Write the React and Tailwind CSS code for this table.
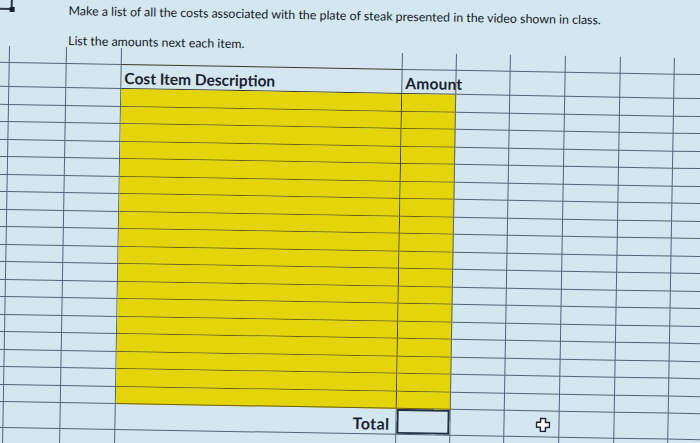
import React from "react";

const W = [
  "w-[27px]",
  "w-[57px]",
  "w-[55px]",
  "w-[281px]",
  "w-[54px]",
  "w-[54px]",
  "w-[55px]",
  "w-[55px]",
  "w-[54px]",
  "w-[55px]",
  "w-[33px]",
];

const FONT = { fontFamily: "Lato, 'Open Sans', Arial, sans-serif" };

function Cell({ i, kind }) {
  const base = `shrink-0 border-r border-b ${W[i]} flex items-end`;
  if (kind === "yellow" && (i === 3 || i === 4)) {
    return (
      <div
        className={`${base} bg-[#e4d40a] border-b-[#6a5f14] ${
          i === 3 ? "border-r-[#3b3a26]" : "border-r-[#4f6479]"
        }`}
      />
    );
  }
  if (kind === "header" && i === 3) {
    return (
      <div className={`${base} border-[#4f6479] border-b-[#3b3a26] pl-[3px] pb-[1px]`}>
        <span className="text-[15.5px] leading-[18px] font-bold text-[#1a2230]">
          Cost Item Description
        </span>
      </div>
    );
  }
  if (kind === "header" && i === 4) {
    return (
      <div className={`${base} border-[#4f6479] border-b-[#3b3a26] pl-[3px] pb-[1px]`}>
        <span className="text-[15.5px] leading-[18px] font-bold text-[#1a2230] tracking-[0.2px]">
          Amount
        </span>
      </div>
    );
  }
  if (kind === "total" && i === 3) {
    return (
      <div className={`${base} border-[#4f6479] justify-end pr-[6px] pb-[1px]`}>
        <span className="text-[16px] leading-[18px] font-bold text-[#1a2230] tracking-[0.4px]">
          Total
        </span>
      </div>
    );
  }
  if (kind === "total" && i === 4) {
    return (
      <div
        className={`${base} border-[#4f6479] shadow-[inset_0_0_0_2px_#253040]`}
      />
    );
  }
  if (kind === "plain" && i === 3) {
    return <div className={`${base} border-[#4f6479] border-b-[#3b3a26]`} />;
  }
  return <div className={`${base} border-[#4f6479]`} />;
}

function Row({ h, kind }) {
  return (
    <div className={`flex ${h}`}>
      {W.map((_, i) => (
        <Cell key={i} i={i} kind={kind} />
      ))}
    </div>
  );
}

export default function App() {
  const yellowRows = Array.from({ length: 18 });
  return (
    <div className="w-[700px] h-[443px] overflow-hidden bg-[#d4e7f1]" style={FONT}>
      <div className="relative w-[780px] -ml-[20px] -mt-[20px] rotate-[1deg] origin-[370px_241px] bg-[#d4e7f1]">
        {/* selection corner of the cell above */}
        <div className="absolute left-[27px] top-0 w-[2px] h-[35px] bg-[#2c3440]" />
        <div className="absolute left-0 top-[34px] w-[29px] h-[2px] bg-[#2c3440]" />
        <div className="absolute left-[26px] top-[33px] w-[5px] h-[5px] bg-[#1c222c]" />

        {/* instructions */}
        <div className="h-[72px] pl-[85px] pt-[27px] text-[#141c28] text-[12.4px]">
          <div className="h-[17px] leading-[17px] whitespace-nowrap">
            Make a list of all the costs associated with the plate of steak presented in the video shown in class.
          </div>
          <div className="mt-[13px] h-[17px] leading-[17px] whitespace-nowrap">
            List the amounts next each item.
          </div>
        </div>

        {/* grid */}
        <Row h="h-[17px]" kind="plain" />
        <Row h="h-[24px]" kind="header" />
        {yellowRows.map((_, r) => (
          <Row key={r} h="h-[17.5px]" kind="yellow" />
        ))}
        <Row h="h-[26px]" kind="total" />
        <Row h="h-[17.5px]" kind="after" />
        <Row h="h-[17.5px]" kind="after" />
        <Row h="h-[17.5px]" kind="after" />

        {/* mouse cursor */}
        <svg
          className="absolute left-[559px] top-[434px]"
          width="15"
          height="15"
          viewBox="0 0 15 15"
        >
          <path
            d="M5 1 H10 V5 H14 V10 H10 V14 H5 V10 H1 V5 H5 Z"
            fill="#ffffff"
            stroke="#1e2530"
            strokeWidth="1.5"
            strokeLinejoin="round"
          />
        </svg>
      </div>
    </div>
  );
}
